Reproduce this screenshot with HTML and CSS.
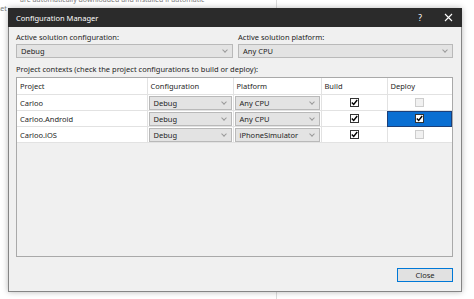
FILE: index.html
```html
<!DOCTYPE html>
<html>
<head>
    <meta http-equiv="Content-Type" content="text/html; charset=UTF-8">
    <title>Configuration Manager</title>
    <link rel="stylesheet" href="styles.css">
</head>

<body>
<div id="page">
    <div class="doc">
        <p class="doc-text first">are automatically downloaded and installed if automatic</p>
        <p class="doc-text second">set</p>
    </div>
    <div class="doc-rest"></div>
</div>

<div class="dialog">
    <div class="titlebar">
        <span class="title">Configuration Manager</span>
        <span class="tb-btn">?</span>
        <span class="tb-btn">
            <svg width="9" height="9" viewBox="0 0 9 9"><path d="M1 1 L8 8 M8 1 L1 8" stroke="#fff" stroke-width="1.1" fill="none"/></svg>
        </span>
    </div>

    <div class="body">
        <div class="top">
            <div class="field">
                <label>Active solution configuration:</label>
                <div class="combo big"><span>Debug</span><i class="chev"></i></div>
            </div>
            <div class="field">
                <label>Active solution platform:</label>
                <div class="combo big"><span>Any CPU</span><i class="chev"></i></div>
            </div>
        </div>

        <label class="ctx">Project contexts (check the project configurations to build or deploy):</label>

        <div class="gridbox">
            <table id="contexts">
                <colgroup>
                    <col class="c-proj"><col class="c-conf"><col class="c-plat"><col class="c-build"><col class="c-deploy">
                </colgroup>
                <tr>
                    <th>Project</th>
                    <th>Configuration</th>
                    <th>Platform</th>
                    <th>Build</th>
                    <th>Deploy</th>
                </tr>
                <tr>
                    <td class="name">Carloo</td>
                    <td><div class="combo"><span>Debug</span><i class="chev"></i></div></td>
                    <td><div class="combo"><span>Any CPU</span><i class="chev"></i></div></td>
                    <td class="chk"><span class="box on"></span></td>
                    <td class="chk"><span class="box off"></span></td>
                </tr>
                <tr>
                    <td class="name">Carloo.Android</td>
                    <td><div class="combo"><span>Debug</span><i class="chev"></i></div></td>
                    <td><div class="combo"><span>Any CPU</span><i class="chev"></i></div></td>
                    <td class="chk"><span class="box on"></span></td>
                    <td class="chk sel"><span class="box on"></span></td>
                </tr>
                <tr>
                    <td class="name">Carloo.iOS</td>
                    <td><div class="combo"><span>Debug</span><i class="chev"></i></div></td>
                    <td><div class="combo"><span>iPhoneSimulator</span><i class="chev"></i></div></td>
                    <td class="chk"><span class="box on"></span></td>
                    <td class="chk"><span class="box off"></span></td>
                </tr>
            </table>
        </div>

        <div class="footer">
            <button class="btn">Close</button>
        </div>
    </div>
</div>
</body>
</html>
```

FILE: styles.css
```css
html, body {
  margin: 0;
  padding: 0;
  background: #ffffff;
  overflow: hidden;
}

#page {
  display: flex;
  height: 299px;
  font-family: "Segoe UI", "Noto Sans", sans-serif;
}

.doc {
  width: 276px;
  border-right: 1px solid #dcdcdc;
  margin-top: -5px;
}

.doc-text {
  margin: 0;
  font-size: 7px;
  line-height: 9px;
  color: #7a7a7a;
  white-space: nowrap;
}

.doc-text.first {
  margin-left: 20px;
}

.doc-text.second {
  margin-left: -3px;
}

.doc-rest {
  flex: 1;
}

/* dialog floating over the page */
.dialog {
  position: absolute;
  left: 8px;
  top: 8px;
  width: 454px;
  height: 284px;
  box-sizing: border-box;
  border: 1px solid #858585;
  border-top: none;
  background: #f0f0f0;
  box-shadow: 0 0 6px rgba(0, 0, 0, 0.28);
  font-family: "Segoe UI", "Noto Sans", sans-serif;
  font-size: 7.5px;
  color: #1e1e1e;
  display: flex;
  flex-direction: column;
}

.titlebar {
  height: 19px;
  margin: 0 -1px;
  background: #2b2b2b;
  color: #ffffff;
  display: flex;
  align-items: center;
  padding-left: 8px;
  font-size: 7.5px;
}

.title {
  flex: 1;
}

.tb-btn {
  width: 28px;
  text-align: center;
  font-size: 8.5px;
  display: flex;
  justify-content: center;
}

.body {
  flex: 1;
  display: flex;
  flex-direction: column;
  padding: 5px 8px 9px 7px;
}

.top {
  display: grid;
  grid-template-columns: 217px 1fr;
  column-gap: 5px;
}

.field label, .ctx {
  display: block;
  line-height: 11px;
  height: 11px;
  white-space: nowrap;
}

.field .combo {
  margin-top: 1px;
}

.combo {
  box-sizing: border-box;
  height: 14px;
  background: #e3e3e3;
  border: 1px solid #b9b9b9;
  display: flex;
  align-items: center;
  padding-left: 4px;
  padding-right: 5px;
  line-height: 12px;
}

.combo span {
  flex: 1;
  white-space: nowrap;
}

.chev {
  width: 3px;
  height: 3px;
  border-right: 1px solid #9a9a9a;
  border-bottom: 1px solid #9a9a9a;
  transform: rotate(45deg);
  margin-top: -2px;
}

.ctx {
  margin-top: 6px;
}

.gridbox {
  margin-top: 2px;
  height: 180px;
  box-sizing: border-box;
  border: 1px solid #a9a9a9;
  background: #f0f0f0;
}

#contexts {
  border-collapse: collapse;
  table-layout: fixed;
  width: 435px;
}

.c-proj { width: 130px; }
.c-conf { width: 86px; }
.c-plat { width: 88px; }
.c-build { width: 66px; }
.c-deploy { width: 65px; }

#contexts th, #contexts td {
  border: 1px solid #e2e2e2;
  background: #ffffff;
  padding: 0;
  font-weight: normal;
  text-align: left;
  white-space: nowrap;
}

#contexts tr:first-child th {
  border-top: none;
  height: 16px;
  padding-left: 3px;
}

#contexts th:first-child, #contexts td:first-child {
  border-left: none;
}

#contexts th:last-child, #contexts td:last-child {
  border-right: none;
}

#contexts td {
  height: 15px;
}

#contexts td .combo {
  margin: 0 1px;
}

#contexts td.name {
  padding-left: 3px;
}

#contexts td.chk {
  text-align: center;
}

#contexts td.sel {
  background: #0a6fd2;
  outline: 1px solid #1c3f78;
  outline-offset: -1px;
}

.box {
  display: inline-block;
  box-sizing: border-box;
  width: 9px;
  height: 9px;
  vertical-align: middle;
  position: relative;
  top: -1px;
}

.box.on {
  background: #ffffff;
  border: 1px solid #333333;
  background-image: url("data:image/svg+xml;utf8,<svg xmlns='http://www.w3.org/2000/svg' width='7' height='7' viewBox='0 0 7 7'><path d='M0.8 3.4 L2.7 5.4 L6.2 1' stroke='black' stroke-width='1.4' fill='none'/></svg>");
  background-repeat: no-repeat;
}

.box.off {
  background: #f1f1f1;
  border: 1px solid #cdcdcd;
}

.footer {
  margin-top: 11px;
  display: flex;
  justify-content: flex-end;
}

.btn {
  width: 56px;
  height: 14px;
  box-sizing: border-box;
  margin: 0;
  padding: 0;
  border: 1px solid #0078d7;
  background: #e1e1e1;
  font-family: "Segoe UI", "Noto Sans", sans-serif;
  font-size: 7.5px;
  line-height: 12px;
  color: #1e1e1e;
}
```
